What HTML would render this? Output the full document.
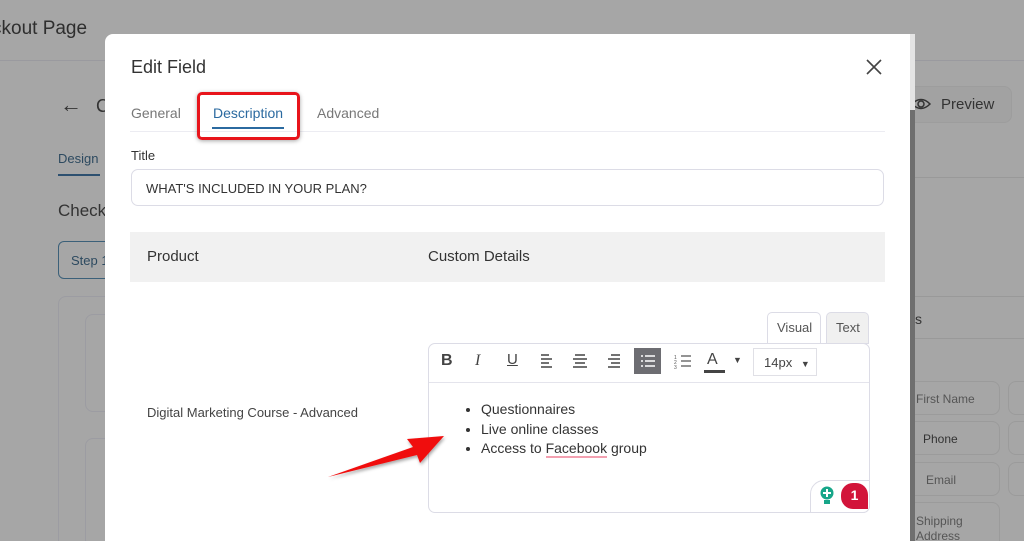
<!DOCTYPE html>
<html style="overflow:hidden;height:541px"><head><style>
*{box-sizing:border-box;margin:0;padding:0}
body{width:1024px;height:541px;overflow:hidden;background:#a6a6a6;font-family:"Liberation Sans",sans-serif;position:relative;color:#333}
.abs{position:absolute;white-space:nowrap}
.bgt{color:#3a3a3a}
.modal{position:absolute;left:105px;top:34px;width:805px;height:507px;background:#fff;border-radius:8px 0 0 0}
.tab{position:absolute;top:105px;font-size:14px;color:#777}
</style></head><body>
<div class="abs" style="left:0;top:60px;width:1024px;height:1px;background:#9a9a9f"></div>
<div class="abs bgt" style="left:-8px;top:18px;font-size:19px;color:#2e2e2e">ckout Page</div>
<div class="abs" style="left:60px;top:92px;font-size:22px;color:#333">&#8592;</div>
<div class="abs" style="left:96px;top:96px;font-size:18px;color:#333">C</div>
<div class="abs" style="left:58px;top:151px;font-size:13px;color:#2d4a60">Design</div>
<div class="abs" style="left:58px;top:174px;width:42px;height:2px;background:#2d5070"></div>
<div class="abs" style="left:58px;top:201px;font-size:17px;color:#333">Check</div>
<div class="abs" style="left:58px;top:241px;width:60px;height:38px;border:1px solid #3b6079;border-radius:6px;font-size:13px;color:#2d4a60;padding:11px 12px">Step 1</div>
<div class="abs" style="left:58px;top:296px;width:60px;height:260px;border:1px solid #9c9ca2;border-radius:8px"></div>
<div class="abs" style="left:85px;top:314px;width:30px;height:98px;border:1px solid #9c9ca2;border-radius:8px"></div>
<div class="abs" style="left:85px;top:438px;width:30px;height:110px;border:1px solid #9c9ca2;border-radius:8px"></div>
<div class="abs" style="left:902px;top:86px;width:110px;height:37px;border-radius:8px;background:#a2a2a2;border:1px solid #9d9d9d;font-size:15px;color:#333;padding:9px 0 0 38px">Preview</div>
<svg class="abs" style="left:910px;top:97px" width="22" height="14" viewBox="0 0 22 14"><path d="M2 7Q11 -2 20 7Q11 16 2 7Z" fill="none" stroke="#333" stroke-width="1.5"/><circle cx="11" cy="7" r="3" fill="none" stroke="#333" stroke-width="1.5"/></svg>
<div class="abs" style="left:915px;top:177px;width:109px;height:1px;background:#999"></div>
<div class="abs" style="left:915px;top:296px;width:109px;height:1px;background:#999"></div>
<div class="abs" style="left:915px;top:311px;font-size:14px;color:#333">s</div>
<div class="abs" style="left:915px;top:338px;width:109px;height:1px;background:#999"></div>
<div class="abs" style="left:900px;top:381px;width:100px;height:34px;border:1px solid #9b9b9b;border-radius:8px;font-size:12px;color:#555;padding:10px 0 0 15px">First Name</div>
<div class="abs" style="left:1008px;top:381px;width:30px;height:34px;border:1px solid #9b9b9b;border-radius:8px"></div>
<div class="abs" style="left:900px;top:421px;width:100px;height:34px;border:1px solid #9b9b9b;border-radius:8px;font-size:12px;color:#333;padding:10px 0 0 22px">Phone</div>
<div class="abs" style="left:1008px;top:421px;width:30px;height:34px;border:1px solid #9b9b9b;border-radius:8px"></div>
<div class="abs" style="left:900px;top:462px;width:100px;height:34px;border:1px solid #9b9b9b;border-radius:8px;font-size:12px;color:#555;padding:10px 0 0 25px">Email</div>
<div class="abs" style="left:1008px;top:462px;width:30px;height:34px;border:1px solid #9b9b9b;border-radius:8px"></div>
<div class="abs" style="left:900px;top:502px;width:100px;height:50px;border:1px solid #9b9b9b;border-radius:8px;font-size:12px;color:#555;padding:11px 0 0 15px;line-height:15px">Shipping<br>Address</div>
<div class="abs" style="left:910px;top:34px;width:5px;height:76px;background:#e4e4e4"></div>
<div class="abs" style="left:910px;top:110px;width:5px;height:431px;background:#6f6f6f"></div>
<div class="modal"></div>
<div class="abs" style="left:131px;top:57px;font-size:18px;color:#333">Edit Field</div>
<svg class="abs" style="left:866px;top:59px" width="16" height="16" viewBox="0 0 16 16"><path d="M1 1L15 15M15 1L1 15" stroke="#444" stroke-width="1.6"/></svg>
<div class="tab" style="left:131px">General</div>
<div class="tab" style="left:213px;color:#2b6aa0">Description</div>
<div class="abs" style="left:212px;top:127px;width:72px;height:2px;background:#2b6aa0"></div>
<div class="tab" style="left:317px">Advanced</div>
<div class="abs" style="left:130px;top:131px;width:755px;height:1px;background:#ececf2"></div>
<div class="abs" style="left:197px;top:92px;width:103px;height:48px;border:3px solid #e8141b;border-radius:5px;box-shadow:0 1px 4px rgba(0,0,0,.35)"></div>
<div class="abs" style="left:131px;top:148px;font-size:13px;color:#333">Title</div>
<div class="abs" style="left:131px;top:169px;width:753px;height:37px;border:1px solid #dcdce6;border-radius:7px;font-size:13px;color:#333;padding:11px 14px">WHAT'S INCLUDED IN YOUR PLAN?</div>
<div class="abs" style="left:130px;top:232px;width:755px;height:50px;background:#f1f1f1"></div>
<div class="abs" style="left:147px;top:248px;font-size:15px;color:#333">Product</div>
<div class="abs" style="left:428px;top:248px;font-size:15px;color:#333">Custom Details</div>
<div class="abs" style="left:147px;top:405px;font-size:13px;color:#444">Digital Marketing Course - Advanced</div>
<div class="abs" style="left:767px;top:312px;width:54px;height:32px;border:1px solid #dcdce6;border-bottom:none;border-radius:5px 5px 0 0;background:#fff;font-size:13px;color:#555;padding:7px 0 0 9px">Visual</div>
<div class="abs" style="left:826px;top:312px;width:43px;height:32px;border:1px solid #dcdce6;border-radius:5px 5px 0 0;background:#f0f0f0;font-size:13px;color:#555;padding:7px 0 0 9px">Text</div>
<div class="abs" style="left:428px;top:343px;width:442px;height:170px;border:1px solid #dcdce6;border-radius:7px;background:#fff"></div>
<div class="abs" style="left:429px;top:382px;width:440px;height:1px;background:#e4e4ec"></div>
<div class="abs" style="left:441px;top:352px;font-size:16px;font-weight:bold;color:#444">B</div>
<div class="abs" style="left:475px;top:352px;font-size:16px;font-style:italic;font-family:'Liberation Serif',serif;color:#444">I</div>
<div class="abs" style="left:507px;top:351px;font-size:15px;text-decoration:underline;color:#444">U</div>
<svg class="abs" style="left:538px;top:353px" width="140" height="16" viewBox="0 0 140 16"><g stroke="#444" stroke-width="1.5"><path d="M3 2H11M3 6H14M3 10H11M3 14H14"/><path d="M37 2H47M35 6H49M37 10H47M35 14H49"/><path d="M73 2H82M70 6H82M73 10H82M70 14H82"/></g></svg>
<div class="abs" style="left:634px;top:348px;width:27px;height:26px;background:#6d6d72"></div>
<svg class="abs" style="left:640px;top:353px" width="16" height="16"><g stroke="#fff" stroke-width="1.5"><path d="M5 3H15M5 8H15M5 13H15"/><path d="M1 3H3M1 8H3M1 13H3"/></g></svg>
<svg class="abs" style="left:674px;top:353px" width="18" height="16"><g stroke="#555" stroke-width="1.2"><path d="M7 3H17M7 8H17M7 13H17"/></g><text x="0" y="6" font-size="5" fill="#555">1</text><text x="0" y="11" font-size="5" fill="#555">2</text><text x="0" y="16" font-size="5" fill="#555">3</text></svg>
<div class="abs" style="left:707px;top:351px;font-size:16px;color:#444">A</div>
<div class="abs" style="left:704px;top:370px;width:21px;height:3px;background:#444"></div>
<div class="abs" style="left:733px;top:355px;font-size:9px;color:#444">▼</div>
<div class="abs" style="left:753px;top:348px;width:64px;height:28px;border:1px solid #e0e0e6;font-size:13px;color:#444;padding:6px 0 0 10px">14px <span style="font-size:9px;margin-left:5px">▼</span></div>
<ul class="abs" style="left:481px;top:400px;font-size:14px;color:#333;line-height:19.5px">
<li>Questionnaires</li><li>Live online classes</li><li>Access to <span style="border-bottom:2px solid #f3a0b0">Facebook</span> group</li></ul>
<div class="abs" style="left:810px;top:480px;width:60px;height:33px;border:1px solid #dcdce6;border-radius:14px 0 7px 0;background:#fff"></div>
<svg class="abs" style="left:818px;top:485px" width="18" height="22"><circle cx="9" cy="8" r="6.5" fill="#17a689"/><rect x="6" y="15" width="6" height="4" fill="#17a689"/><path d="M9 4V12M5 8H13" stroke="#fff" stroke-width="2"/></svg>
<div class="abs" style="left:841px;top:483px;width:27px;height:26px;background:#d2143a;border-radius:12px 12px 0 12px;color:#fff;font-weight:bold;font-size:14px;text-align:center;padding-top:4px">1</div>
<svg class="abs" style="left:320px;top:425px" width="130" height="60" viewBox="0 0 130 60"><defs><filter id="s"><feDropShadow dx="1" dy="2" stdDeviation="1.5" flood-opacity=".35"/></filter></defs><path d="M8 52L93 22L87 14L124 11L100 38L97 30Z" fill="#f01010" filter="url(#s)"/></svg>
</body></html>
